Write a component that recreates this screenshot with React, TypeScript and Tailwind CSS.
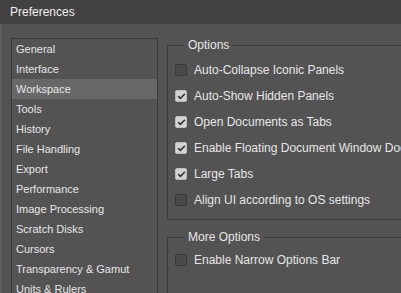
import { Check } from "lucide-react";

const sections = [
  "General",
  "Interface",
  "Workspace",
  "Tools",
  "History",
  "File Handling",
  "Export",
  "Performance",
  "Image Processing",
  "Scratch Disks",
  "Cursors",
  "Transparency & Gamut",
  "Units & Rulers",
  "Guides, Grid & Slices",
];

const options = [
  { label: "Auto-Collapse Iconic Panels", checked: false },
  { label: "Auto-Show Hidden Panels", checked: true },
  { label: "Open Documents as Tabs", checked: true },
  { label: "Enable Floating Document Window Docking", checked: true },
  { label: "Large Tabs", checked: true },
  { label: "Align UI according to OS settings", checked: false },
];

function CheckRow({ label, checked }: { label: string; checked: boolean }) {
  return (
    <label className="flex h-[26px] items-center gap-[7px] whitespace-nowrap">
      <span
        className={
          checked
            ? "flex h-[12px] w-[12px] items-center justify-center rounded-[2px] border border-[#bdbdbd] bg-[#d4d4d4]"
            : "flex h-[12px] w-[12px] items-center justify-center rounded-[2px] border border-[#383838] bg-[#4a4a4a]"
        }
      >
        {checked && <Check size={9} strokeWidth={4} className="text-[#2e2e2e]" />}
      </span>
      <span>{label}</span>
    </label>
  );
}

export default function App() {
  return (
    <div className="h-[293px] w-[401px] overflow-hidden bg-[#535353] text-[#e6e6e6] [font-family:'Liberation_Sans',Arial,sans-serif]">
      <div className="flex h-[24px] items-center bg-[#424242] pl-[10px] text-[12px] text-[#efefef]">
        Preferences
      </div>

      <div className="flex items-start gap-[9px] border-l-2 border-[#5e5e5e] pl-[9px] pt-[14px]">
        <ul className="w-[147px] shrink-0 border border-[#3b3b3b] text-[11px]">
          {sections.map((s) => (
            <li
              key={s}
              className={
                s === "Workspace"
                  ? "flex h-[20px] items-center bg-[#686868] pl-[4px]"
                  : "flex h-[20px] items-center pl-[4px]"
              }
            >
              {s}
            </li>
          ))}
        </ul>

        <div className="flex w-[300px] shrink-0 flex-col gap-[10px] text-[12px]">
          <fieldset className="border border-[#3b3b3b] pb-[6px] pl-[7px]">
            <legend className="ml-[9px] px-[4px] leading-[15px]">Options</legend>
            <div className="mt-[4px]">
              {options.map((o) => (
                <CheckRow key={o.label} {...o} />
              ))}
            </div>
          </fieldset>

          <fieldset className="h-[80px] border border-[#3b3b3b] pl-[7px]">
            <legend className="ml-[9px] px-[4px] leading-[15px]">More Options</legend>
            <div className="mt-[2px]">
              <CheckRow label="Enable Narrow Options Bar" checked={false} />
            </div>
          </fieldset>
        </div>
      </div>
    </div>
  );
}
